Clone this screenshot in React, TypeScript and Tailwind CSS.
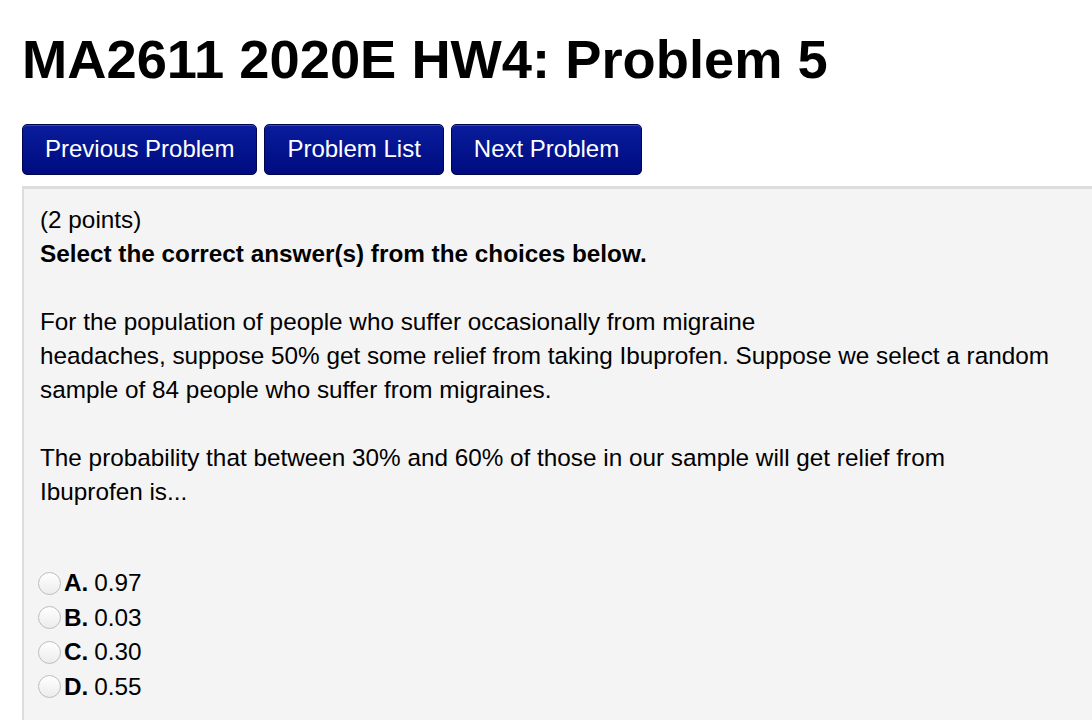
const buttons = ['Previous Problem', 'Problem List', 'Next Problem']

const choices = [
  { label: 'A.', value: '0.97' },
  { label: 'B.', value: '0.03' },
  { label: 'C.', value: '0.30' },
  { label: 'D.', value: '0.55' },
]

export default function App() {
  return (
    <div className="min-h-screen bg-white overflow-hidden font-['Liberation_Sans',Arial,sans-serif] text-black">
      <h1 className="pl-[22px] pt-[27px] text-[54.3px] leading-[66px] font-bold">
        MA2611 2020E HW4: Problem 5
      </h1>

      <div className="flex gap-[7px] pl-[22px] mt-[31px]">
        {buttons.map(b => (
          <button
            key={b}
            className="h-[51px] px-[22px] pb-[2px] rounded-[5px] border border-[#00054f] bg-gradient-to-b from-[#0a1c9c] to-[#000b80] text-white text-[24px] shadow-[inset_0_1px_0_rgba(255,255,255,0.2)]"
          >
            {b}
          </button>
        ))}
      </div>

      <div className="ml-[22px] mt-[11px] bg-[#f4f4f4] border-t-[3px] border-l-[2px] border-[#dddddd] pl-[16px] pt-[14px] pb-[20px] text-[24.3px] leading-[34px]">
        <div>(2 points)</div>
        <div className="font-bold">Select the correct answer(s) from the choices below.</div>

        <p className="mt-[34px]">
          For the population of people who suffer occasionally from migraine
          <br />
          headaches, suppose 50% get some relief from taking Ibuprofen. Suppose we select a random
          <br />
          sample of 84 people who suffer from migraines.
        </p>

        <p className="mt-[34px]">
          The probability that between 30% and 60% of those in our sample will get relief from
          <br />
          Ibuprofen is...
        </p>

        <div className="mt-[57px] flex flex-col">
          {choices.map(c => (
            <label key={c.label} className="flex items-center h-[34.5px]">
              <span className="w-[23px] h-[23px] rounded-full border border-[#bdbdbd] bg-gradient-to-b from-white to-[#ececec] mr-[3px] -ml-[2px]" />
              <span className="font-bold">{c.label}</span>
              <span className="ml-[6px]">{c.value}</span>
            </label>
          ))}
        </div>
      </div>
    </div>
  )
}
